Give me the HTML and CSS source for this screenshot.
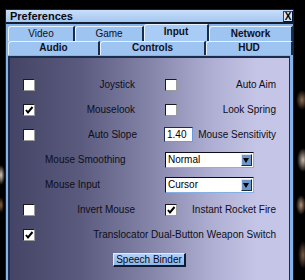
FILE: index.html
```html
<!DOCTYPE html>
<html>
<head>
<meta charset="utf-8">
<link rel="stylesheet" href="styles.css">
</head>
<body>
<div class="window">
  <div class="titlebar">
    <span class="title">Preferences</span>
    <span class="close">X</span>
  </div>
  <div class="tabrow row1">
    <div class="tab w-video">Video</div>
    <div class="tab w-game">Game</div>
    <div class="tab active w-input">Input</div>
    <div class="tab bold w-network">Network</div>
  </div>
  <div class="tabrow row2">
    <div class="tab bold w-audio">Audio</div>
    <div class="tab bold w-controls">Controls</div>
    <div class="tab bold w-hud">HUD</div>
  </div>
  <div class="panel">
    <div class="grid">
      <div class="cell"><span class="cb"></span><span class="lbl">Joystick</span></div>
      <div class="cell"><span class="cb"></span><span class="lbl">Auto Aim</span></div>

      <div class="cell"><span class="cb"><svg viewBox="0 0 10 10" class="chk"><polyline points="2,5 4,7.5 8.5,2"/></svg></span><span class="lbl">Mouselook</span></div>
      <div class="cell"><span class="cb"></span><span class="lbl">Look Spring</span></div>

      <div class="cell"><span class="cb"></span><span class="lbl shift">Auto Slope</span></div>
      <div class="cell sens"><span class="edit">1.40</span><span class="lbl">Mouse Sensitivity</span></div>

      <div class="cell plain"><span class="lbl">Mouse Smoothing</span></div>
      <div class="cell"><span class="select"><span class="val">Normal</span><span class="arrow"></span></span></div>

      <div class="cell plain"><span class="lbl">Mouse Input</span></div>
      <div class="cell"><span class="select"><span class="val">Cursor</span><span class="arrow"></span></span></div>

      <div class="cell"><span class="cb"></span><span class="lbl">Invert Mouse</span></div>
      <div class="cell"><span class="cb"><svg viewBox="0 0 10 10" class="chk"><polyline points="2,5 4,7.5 8.5,2"/></svg></span><span class="lbl">Instant Rocket Fire</span></div>

      <div class="cell span"><span class="cb"><svg viewBox="0 0 10 10" class="chk"><polyline points="2,5 4,7.5 8.5,2"/></svg></span><span class="lbl">Translocator Dual-Button Weapon Switch</span></div>

      <div class="cell span center"><span class="button">Speech Binder</span></div>
    </div>
  </div>
</div>
</body>
</html>
```

FILE: styles.css
```css
* { box-sizing: border-box; }
html, body { margin: 0; padding: 0; }
body {
  width: 305px;
  height: 280px;
  overflow: hidden;
  background:
    radial-gradient(ellipse 6px 10px at 302px 100px, #8a6a50 0%, rgba(0,0,0,0) 100%),
    radial-gradient(ellipse 6px 12px at 303px 160px, #c8b8a8 0%, rgba(0,0,0,0) 100%),
    radial-gradient(ellipse 5px 10px at 301px 205px, #b09078 0%, rgba(0,0,0,0) 100%),
    radial-gradient(ellipse 5px 14px at 303px 255px, #7a5a48 0%, rgba(0,0,0,0) 100%),
    radial-gradient(ellipse 4px 10px at 1px 175px, #d8c8b8 0%, rgba(0,0,0,0) 100%),
    radial-gradient(ellipse 3px 8px at 1px 205px, #8a6040 0%, rgba(0,0,0,0) 100%),
    #000;
  font-family: "Liberation Sans", Arial, sans-serif;
  font-size: 10px;
  color: #0e0e18;
}
.window {
  margin: 9px 0 0 5px;
  width: 289px;
  height: 271px;
  border: 1px solid #0c2446;
  border-bottom: none;
  background: #86b4ea;
  display: flex;
  flex-direction: column;
}
.titlebar {
  height: 14px;
  background: linear-gradient(#c8defa, #a6c6f0);
  border-bottom: 2px solid #121e34;
  display: flex;
  align-items: center;
  justify-content: space-between;
  padding: 0 0 0 4px;
}
.title {
  font-weight: bold;
  font-size: 11px;
  color: #0a0a14;
  line-height: 12px;
}
.close {
  width: 10px;
  height: 11px;
  margin-right: 0;
  background: #d8e6f8;
  border: 1px solid #304868;
  border-right-color: #0a1424;
  border-bottom-color: #0a1424;
  font-weight: bold;
  font-size: 10px;
  line-height: 9px;
  text-align: center;
  color: #000;
}
.tabrow {
  display: flex;
  padding-left: 2px;
  align-items: flex-end;
}
.row1 { height: 17px; }
.row2 { height: 14px; }
.tab {
  height: 15px;
  background: #9ec4f2;
  border-top: 1px solid #e8f2ff;
  border-left: 1px solid #e8f2ff;
  border-right: 2px solid #1a2c48;
  border-radius: 3px 0 0 0;
  text-align: center;
  line-height: 13px;
  font-size: 10px;
  color: #101020;
}
.row2 .tab { height: 14px; line-height: 12px; }
.tab.bold, .tab.active { font-weight: bold; }
.tab.active {
  height: 17px;
  background: #a8ccf6;
  line-height: 14px;
}
.w-video { width: 67px; }
.w-game { width: 69px; }
.w-input { width: 65px; }
.w-network { width: 84px; }
.w-audio { width: 92px; }
.w-controls { width: 106px; }
.w-hud { width: 87px; }
.panel {
  flex: 1;
  margin: 1px 0 0 2px;
  width: 282px;
  border-top: 2px solid #1c2c4c;
  border-left: 2px solid #1c2c4c;
  border-right: 1px solid #1c2c4c;
  background: linear-gradient(to right, #444466 0%, #5a5a7e 25%, #8484a8 50%, #aeaed2 72%, #c4c4e6 88%, #c6c6e8 100%);
  padding: 14px 0 0 13px;
}
.grid {
  display: grid;
  grid-template-columns: 112px 111px;
  grid-auto-rows: 25px;
  column-gap: 30px;
}
.cell {
  display: flex;
  align-items: center;
  justify-content: space-between;
}
.cell.plain { justify-content: flex-start; padding-left: 22px; }
.cell.span { grid-column: 1 / span 2; }
.cell.center { justify-content: center; }
.lbl { white-space: nowrap; line-height: 12px; }
.lbl.shift { margin-right: -2px; }
.cb {
  width: 12px;
  height: 12px;
  background: #fff;
  border: 1px solid #1a1a1a;
  border-right-color: #9a9a9a;
  border-bottom-color: #9a9a9a;
  display: block;
  flex: none;
}
.chk {
  display: block;
  width: 10px;
  height: 10px;
  fill: none;
  stroke: #000;
  stroke-width: 2;
}
.sens { justify-content: space-between; margin-left: -1px; }
.edit {
  width: 29px;
  height: 15px;
  background: #fff;
  border: 1px solid #1c2c4c;
  border-right-color: #6a9ad8;
  border-bottom-color: #6a9ad8;
  padding-left: 2px;
  line-height: 13px;
  color: #000;
}
.select {
  width: 89px;
  height: 16px;
  background: #fff;
  border: 1px solid #0c0c18;
  border-right-color: #84b0e4;
  border-bottom-color: #84b0e4;
  display: flex;
  align-items: stretch;
}
.val {
  flex: 1;
  padding-left: 2px;
  line-height: 14px;
  font-size: 10px;
  color: #000;
}
.arrow {
  width: 11px;
  margin: 1px 1px 1px 0;
  background: #6e96c8;
  border: 1px solid #dce8f8;
  border-right-color: #1a2a44;
  border-bottom-color: #1a2a44;
  position: relative;
}
.arrow::after {
  content: "";
  position: absolute;
  left: 1px;
  top: 3px;
  border-left: 3.5px solid transparent;
  border-right: 3.5px solid transparent;
  border-top: 5px solid #000;
}
.button {
  width: 73px;
  height: 14px;
  background: linear-gradient(#b4d2f6, #8cb6ea);
  border: 1px solid #dcecff;
  border-right: 2px solid #0e1a30;
  border-bottom: 2px solid #0e1a30;
  text-align: center;
  line-height: 11px;
  color: #0a0a18;
}
```
